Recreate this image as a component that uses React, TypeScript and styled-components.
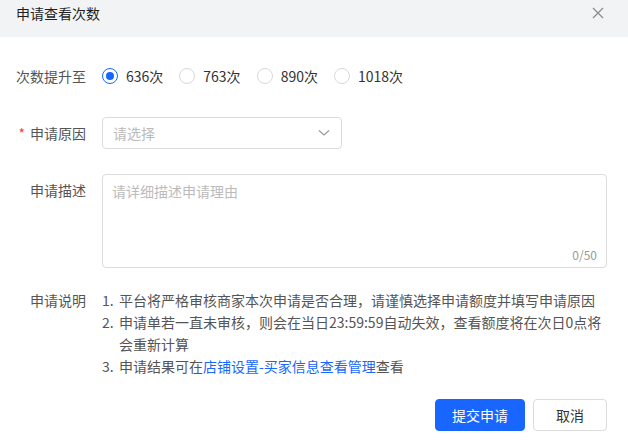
import React, { useState } from "react";
import styled, { createGlobalStyle } from "styled-components";

const GlobalStyle = createGlobalStyle`
  * { box-sizing: border-box; }
  body {
    margin: 0;
    background: #fff;
    font-family: "Noto Sans CJK SC", "Noto Sans", sans-serif;
    font-size: 14px;
    color: #333;
  }
`;

const options = ["636次", "763次", "890次", "1018次"];

export default function App() {
  const [picked, setPicked] = useState(0);

  return (
    <Dialog>
      <GlobalStyle />
      <Header>
        <Title>申请查看次数</Title>
        <CloseBtn aria-label="close">
          <svg width="12" height="12" viewBox="0 0 12 12">
            <path
              d="M1 1 L11 11 M11 1 L1 11"
              stroke="#8c8c8c"
              strokeWidth="1.3"
              fill="none"
            />
          </svg>
        </CloseBtn>
      </Header>

      <Body>
        <Row $mb={25}>
          <Label>次数提升至</Label>
          <RadioGroup>
            {options.map((item, key) => (
              <RadioItem key={key} onClick={() => setPicked(key)}>
                <RadioCircle $checked={picked === key} />
                {item}
              </RadioItem>
            ))}
          </RadioGroup>
        </Row>

        <Row $mb={25}>
          <Label>
            <Star>*</Star>申请原因
          </Label>
          <Select>
            <Placeholder>请选择</Placeholder>
            <svg width="12" height="8" viewBox="0 0 12 8">
              <path
                d="M1 1.5 L6 6 L11 1.5"
                stroke="#999"
                strokeWidth="1.2"
                fill="none"
              />
            </svg>
          </Select>
        </Row>

        <Row $mb={21} $top>
          <Label>申请描述</Label>
          <TextareaBox>
            <Textarea placeholder="请详细描述申请理由" />
            <Counter>0/50</Counter>
          </TextareaBox>
        </Row>

        <Row $mb={22} $top>
          <NoteLabel>申请说明</NoteLabel>
          <NoteList>
            <NoteItem>
              <Num>1.</Num>
              <span>
                平台将严格审核商家本次申请是否合理，请谨慎选择申请额度并填写申请原因
              </span>
            </NoteItem>
            <NoteItem>
              <Num>2.</Num>
              <span>
                申请单若一直未审核，则会在当日23:59:59自动失效，查看额度将在次日0点将会重新计算
              </span>
            </NoteItem>
            <NoteItem>
              <Num>3.</Num>
              <span>
                申请结果可在<Link>店铺设置-买家信息查看管理</Link>查看
              </span>
            </NoteItem>
          </NoteList>
        </Row>

        <Footer>
          <Button $primary>提交申请</Button>
          <Button>取消</Button>
        </Footer>
      </Body>
    </Dialog>
  );
}

const Dialog = styled.div`
  width: 628px;
  height: 446px;
  background: #fff;
  overflow: hidden;
`;

const Header = styled.div`
  height: 37px;
  background: #f2f3f5;
  display: flex;
  justify-content: space-between;
  align-items: flex-start;
  padding: 3px 24px 0 16px;
`;

const Title = styled.div`
  font-size: 14px;
  line-height: 20px;
  color: #1f1f1f;
`;

const CloseBtn = styled.button`
  border: none;
  background: none;
  padding: 0;
  margin-top: 4px;
  width: 12px;
  height: 12px;
  display: flex;
  cursor: pointer;
`;

const Body = styled.div`
  padding: 23px 21px 0 16px;
`;

const Row = styled.div<{ $mb: number; $top?: boolean }>`
  display: flex;
  align-items: ${(p) => (p.$top ? "flex-start" : "center")};
  gap: 16px;
  min-height: 32px;
  margin-bottom: ${(p) => p.$mb}px;
`;

const Label = styled.div`
  width: 70px;
  flex-shrink: 0;
  text-align: right;
  line-height: 32px;
  color: #555;
  white-space: nowrap;
`;

const NoteLabel = styled(Label)`
  line-height: 22px;
`;

const Star = styled.span`
  color: #ff3b4b;
  margin-right: 5px;
`;

const RadioGroup = styled.div`
  display: flex;
  align-items: center;
  gap: 16px;
`;

const RadioItem = styled.label`
  display: flex;
  align-items: center;
  gap: 8px;
  color: #333;
  line-height: 32px;
  cursor: pointer;
`;

const RadioCircle = styled.span<{ $checked: boolean }>`
  width: 16px;
  height: 16px;
  border-radius: 50%;
  border: ${(p) => (p.$checked ? "1.5px solid #1966ff" : "1px solid #d9d9d9")};
  display: flex;
  align-items: center;
  justify-content: center;
  background: #fff;
  &::after {
    content: "";
    width: 8px;
    height: 8px;
    border-radius: 50%;
    background: #1966ff;
    display: ${(p) => (p.$checked ? "block" : "none")};
  }
`;

const Select = styled.div`
  width: 240px;
  height: 32px;
  border: 1px solid #dcdcdc;
  border-radius: 4px;
  display: flex;
  align-items: center;
  justify-content: space-between;
  padding: 0 11px 0 10px;
`;

const Placeholder = styled.span`
  color: #bbb;
`;

const TextareaBox = styled.div`
  position: relative;
  width: 505px;
  height: 94px;
`;

const Textarea = styled.textarea`
  width: 100%;
  height: 100%;
  border: 1px solid #dcdcdc;
  border-radius: 4px;
  padding: 5px 9px;
  resize: none;
  font-family: "Noto Sans CJK SC", "Noto Sans", sans-serif;
  font-size: 14px;
  line-height: 22px;
  color: #333;
  outline: none;
  &::placeholder {
    color: #bbb;
  }
`;

const Counter = styled.span`
  position: absolute;
  right: 10px;
  bottom: 5px;
  font-size: 12px;
  line-height: 16px;
  color: #999;
`;

const NoteList = styled.div`
  width: 505px;
  display: flex;
  flex-direction: column;
  color: #555;
  line-height: 22px;
`;

const NoteItem = styled.div`
  display: flex;
`;

const Num = styled.span`
  width: 17px;
  flex-shrink: 0;
`;

const Link = styled.span`
  color: #1966ff;
`;

const Footer = styled.div`
  display: flex;
  justify-content: flex-end;
  gap: 8px;
`;

const Button = styled.button<{ $primary?: boolean }>`
  height: 32px;
  padding: 0;
  width: ${(p) => (p.$primary ? "90px" : "74px")};
  border-radius: 4px;
  border: 1px solid ${(p) => (p.$primary ? "#1966ff" : "#dcdcdc")};
  background: ${(p) => (p.$primary ? "#1966ff" : "#fff")};
  color: ${(p) => (p.$primary ? "#fff" : "#333")};
  font-family: "Noto Sans CJK SC", "Noto Sans", sans-serif;
  font-size: 14px;
  cursor: pointer;
`;
